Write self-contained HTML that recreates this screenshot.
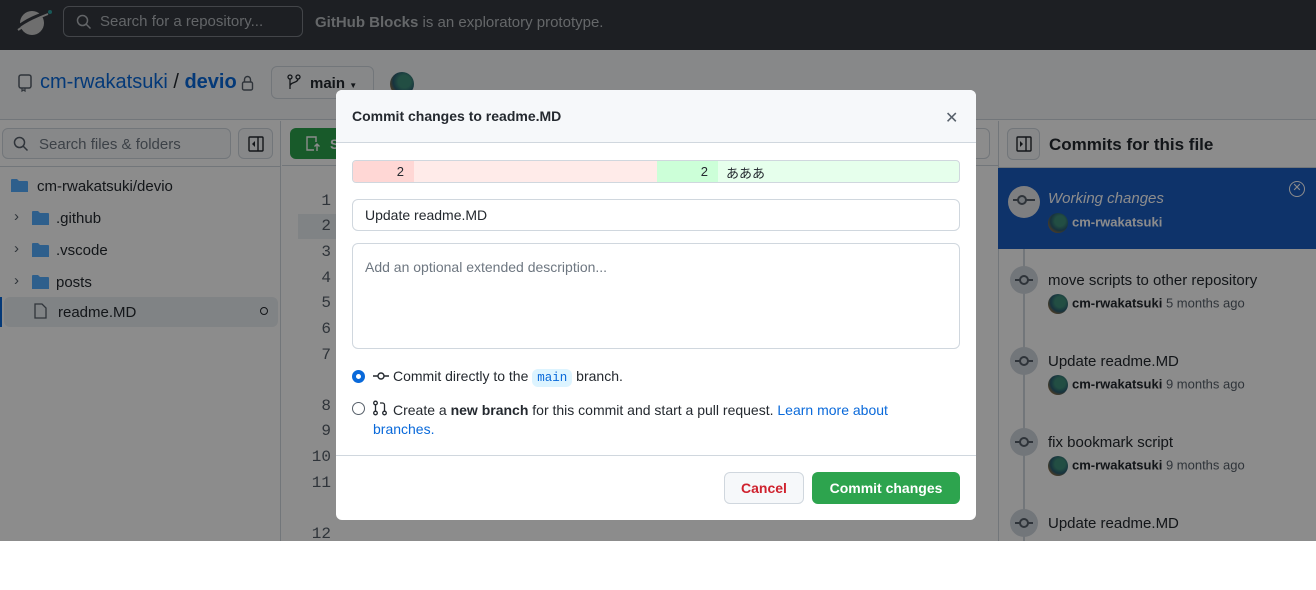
<!DOCTYPE html>
<html><head><meta charset="utf-8">
<style>
*{box-sizing:border-box;margin:0;padding:0}
body{width:1316px;height:541px;overflow:hidden;position:relative;font-family:"Liberation Sans","Noto Sans CJK JP",sans-serif;background:#fff;color:#24292f;font-size:14px}
.a{position:absolute}
.mono{font-family:"Liberation Mono",monospace}
.ln{position:absolute;right:985px;font-family:"Liberation Mono",monospace;font-size:16px;color:#57606a}
.commit{position:absolute;left:998px;width:318px;height:81px}
.node{position:absolute;left:12px;width:28px;height:28px;border-radius:50%;background:#d0d7de;}
.node:before{content:"";position:absolute;left:5px;right:5px;top:13px;height:2px;background:#57606a}
.node:after{content:"";position:absolute;left:9px;top:9px;width:6px;height:6px;border:2px solid #57606a;border-radius:50%;background:#d0d7de}
.av{display:inline-block;width:20px;height:20px;border-radius:50%;background:radial-gradient(circle at 60% 40%,#3f8f7a 30%,#2b5e72 55%,#a0703a 80%);vertical-align:middle;margin-right:4px}
.ct{position:absolute;left:50px;top:8px;font-size:15px;color:#24292f}
.cm{position:absolute;left:50px;top:32px;font-size:13px;color:#57606a}
.cm b{color:#24292f}
</style></head><body>
<div class="a" style="left:0;top:0;width:1316px;height:50px;background:#353a40"></div>
<svg class="a" style="left:14px;top:6px" width="40" height="34" viewBox="0 0 40 34"><circle cx="18" cy="17" r="12" fill="#c8c8c8"/><path d="M2 22 Q18 10 36 6" stroke="#353a40" stroke-width="3" fill="none"/><path d="M4 24 Q18 14 34 8" stroke="#c8c8c8" stroke-width="2" fill="none"/><circle cx="36" cy="6" r="2" fill="#2ea0a0"/></svg>
<div class="a" style="left:63px;top:6px;width:240px;height:31px;border:1px solid #7a7f86;border-radius:6px;color:#b4b8bd;font-size:15px;padding:6px 0 0 36px">Search for a repository...</div>
<svg class="a" style="left:76px;top:14px" width="16" height="16" viewBox="0 0 16 16"><circle cx="6.5" cy="6.5" r="5" stroke="#b4b8bd" stroke-width="1.5" fill="none"/><path d="M10 10l4.5 4.5" stroke="#b4b8bd" stroke-width="1.5"/></svg>
<div class="a" style="left:315px;top:14px;color:#b8bcc0;font-size:15px"><b>GitHub Blocks</b> is an exploratory prototype.</div>
<div class="a" style="left:0;top:50px;width:1316px;height:70px;background:#f6f8fa;border-bottom:1px solid #d0d7de"></div>
<svg class="a" style="left:17px;top:74px" width="16" height="18" viewBox="0 0 16 18"><rect x="2" y="1" width="12" height="13" rx="2" stroke="#57606a" stroke-width="1.5" fill="none"/><path d="M5 14v3l1.5-1 1.5 1v-3" stroke="#57606a" stroke-width="1.2" fill="none"/></svg>
<div class="a" style="left:40px;top:71px;font-size:20px;color:#0969da">cm-rwakatsuki<span style="color:#24292f"> / </span><b style="font-weight:600">devio</b></div>
<svg class="a" style="left:241px;top:75px" width="13" height="16" viewBox="0 0 13 16"><rect x="1.5" y="7" width="10" height="8" rx="1.5" stroke="#57606a" stroke-width="1.4" fill="none"/><path d="M3.5 7V4.5a3 3 0 016 0V7" stroke="#57606a" stroke-width="1.4" fill="none"/></svg>
<div class="a" style="left:271px;top:66px;width:103px;height:33px;border:1px solid #d0d7de;border-radius:6px;background:#f6f8fa;font-size:15px;padding:8px 0 0 38px;font-weight:600">main <span style="font-size:8px">▼</span></div>
<svg class="a" style="left:287px;top:74px" width="14" height="16" viewBox="0 0 14 16"><circle cx="3" cy="3" r="2" stroke="#24292f" stroke-width="1.3" fill="none"/><circle cx="11" cy="3" r="2" stroke="#24292f" stroke-width="1.3" fill="none"/><path d="M3 5v10M11 5c0 4-8 3-8 7" stroke="#24292f" stroke-width="1.3" fill="none"/></svg>
<div class="a av" style="left:390px;top:72px;width:24px;height:24px"></div>
<div class="a" style="left:0;top:121px;width:281px;height:420px;background:#fff;border-right:1px solid #d0d7de"></div>
<div class="a" style="left:2px;top:128px;width:229px;height:31px;border:1px solid #d0d7de;border-radius:6px;background:#f6f8fa;color:#6e7781;font-size:15px;padding:7px 0 0 36px">Search files &amp; folders</div>
<svg class="a" style="left:13px;top:136px" width="16" height="16" viewBox="0 0 16 16"><circle cx="6.5" cy="6.5" r="5" stroke="#57606a" stroke-width="1.5" fill="none"/><path d="M10 10l4.5 4.5" stroke="#57606a" stroke-width="1.5"/></svg>
<div class="a" style="left:238px;top:128px;width:35px;height:31px;border:1px solid #d0d7de;border-radius:6px;background:#f6f8fa"></div>
<svg class="a" style="left:248px;top:136px" width="16" height="16" viewBox="0 0 16 16"><rect x="1" y="1" width="14" height="14" rx="1" stroke="#24292f" stroke-width="1.4" fill="none"/><path d="M10 1v14" stroke="#24292f" stroke-width="1.4"/><path d="M7 5l-3 3 3 3z" fill="#24292f"/></svg>
<div class="a" style="left:0;top:166px;width:281px;height:1px;background:#d0d7de"></div>
<svg class="a" style="left:11px;top:178px" width="17" height="15" viewBox="0 0 17 15"><path d="M0 2a1 1 0 011-1h5l2 2h8a1 1 0 011 1v10H0z" fill="#54aeff"/></svg>
<div class="a" style="left:37px;top:178px;font-size:15px">cm-rwakatsuki/devio</div>
<div class="a" style="left:14px;top:208px;font-size:15px;color:#57606a">›</div>
<svg class="a" style="left:32px;top:211px" width="17" height="14" viewBox="0 0 17 14"><path d="M0 1a1 1 0 011-1h5l2 2h8a1 1 0 011 1v11H0z" fill="#54aeff"/></svg>
<div class="a" style="left:56px;top:210px;font-size:15px">.github</div>
<div class="a" style="left:14px;top:240px;font-size:15px;color:#57606a">›</div>
<svg class="a" style="left:32px;top:243px" width="17" height="14" viewBox="0 0 17 14"><path d="M0 1a1 1 0 011-1h5l2 2h8a1 1 0 011 1v11H0z" fill="#54aeff"/></svg>
<div class="a" style="left:56px;top:242px;font-size:15px">.vscode</div>
<div class="a" style="left:14px;top:272px;font-size:15px;color:#57606a">›</div>
<svg class="a" style="left:32px;top:275px" width="17" height="14" viewBox="0 0 17 14"><path d="M0 1a1 1 0 011-1h5l2 2h8a1 1 0 011 1v11H0z" fill="#54aeff"/></svg>
<div class="a" style="left:56px;top:274px;font-size:15px">posts</div>
<div class="a" style="left:4px;top:297px;height:30px;background:#eaeef2;border-radius:6px;width:274px"></div>
<div class="a" style="left:0;top:297px;width:2px;height:30px;background:#0969da"></div>
<svg class="a" style="left:34px;top:303px" width="13" height="16" viewBox="0 0 13 16"><path d="M1 1h7l4 4v10H1z" stroke="#57606a" stroke-width="1.3" fill="none"/></svg>
<div class="a" style="left:58px;top:304px;font-size:15px">readme.MD</div>
<div class="a" style="left:260px;top:307px;width:8px;height:8px;border:1.5px solid #24292f;border-radius:50%"></div>
<div class="a" style="left:282px;top:121px;width:716px;height:45px;border-bottom:1px solid #d0d7de"></div>
<div class="a" style="left:290px;top:128px;width:60px;height:31px;background:#2da44e;border-radius:6px"></div>
<svg class="a" style="left:305px;top:135px" width="16" height="17" viewBox="0 0 16 17"><path d="M9 15H2V2h9v5" stroke="#fff" stroke-width="1.4" fill="none"/><path d="M12 16V9M9.5 11.5L12 9l2.5 2.5" stroke="#fff" stroke-width="1.4" fill="none"/></svg>
<div class="a" style="left:330px;top:136px;color:#fff;font-weight:bold;font-size:14px">S</div>
<div class="a" style="left:940px;top:128px;width:50px;height:31px;border:1px solid #d0d7de;border-radius:6px"></div>
<div class="a" style="left:298px;top:214px;width:40px;height:25px;background:#eaeef2"></div>
<div class="ln" style="top:192px">1</div><div class="ln" style="top:217px">2</div><div class="ln" style="top:243px">3</div><div class="ln" style="top:269px">4</div><div class="ln" style="top:294px">5</div><div class="ln" style="top:320px">6</div><div class="ln" style="top:346px">7</div><div class="ln" style="top:397px">8</div><div class="ln" style="top:422px">9</div><div class="ln" style="top:448px">10</div><div class="ln" style="top:474px">11</div><div class="ln" style="top:525px">12</div>
<div class="a" style="left:998px;top:121px;width:318px;height:420px;border-left:1px solid #d0d7de"></div>
<div class="a" style="left:998px;top:167px;width:318px;height:1px;background:#d0d7de"></div>
<div class="a" style="left:1007px;top:128px;width:33px;height:32px;border:1px solid #d0d7de;border-radius:6px;background:#f6f8fa"></div>
<svg class="a" style="left:1016px;top:136px" width="16" height="16" viewBox="0 0 16 16"><rect x="1" y="1" width="14" height="14" rx="1" stroke="#24292f" stroke-width="1.4" fill="none"/><path d="M10 1v14" stroke="#24292f" stroke-width="1.4"/><path d="M4 5l3 3-3 3z" fill="#24292f"/></svg>
<div class="a" style="left:1049px;top:135px;font-size:17px;font-weight:bold">Commits for this file</div>
<div class="a" style="left:1023px;top:168px;width:2px;height:373px;background:#d0d7de"></div>
<div class="commit" style="top:168px;background:#1b5dc2">
 <div class="node" style="top:18px;left:10px;width:32px;height:32px;background:#e6e8eb"></div>
 <div class="ct" style="top:22px;font-style:italic;color:#fff">Working changes</div>
 <div class="cm" style="top:45px;color:#fff"><span class="av"></span><b style="color:#fff">cm-rwakatsuki</b></div>
 <div class="a" style="left:291px;top:13px;width:16px;height:16px;border:1.5px solid #fff;border-radius:50%;color:#fff;font-size:11px;text-align:center;line-height:13px">✕</div>
</div>
<div class="commit" style="top:266px"><div class="node" style="top:0"></div><div class="ct" style="top:6px">move scripts to other repository</div><div class="cm" style="top:28px"><span class="av"></span><b>cm-rwakatsuki</b> 5 months ago</div></div>
<div class="commit" style="top:347px"><div class="node" style="top:0"></div><div class="ct" style="top:6px">Update readme.MD</div><div class="cm" style="top:28px"><span class="av"></span><b>cm-rwakatsuki</b> 9 months ago</div></div>
<div class="commit" style="top:428px"><div class="node" style="top:0"></div><div class="ct" style="top:6px">fix bookmark script</div><div class="cm" style="top:28px"><span class="av"></span><b>cm-rwakatsuki</b> 9 months ago</div></div>
<div class="commit" style="top:509px"><div class="node" style="top:0"></div><div class="ct" style="top:6px">Update readme.MD</div></div>
<div class="a" style="left:0;top:0;width:1316px;height:541px;background:rgba(0,0,0,0.45)"></div>
<div class="a" style="left:336px;top:90px;width:640px;height:430px;background:#fff;border-radius:6px;overflow:hidden">
 <div class="a" style="left:0;top:0;width:640px;height:53px;background:#f6f8fa;border-bottom:1px solid #d0d7de"></div>
 <div class="a" style="left:16px;top:18px;font-size:14px;font-weight:bold">Commit changes to readme.MD</div>
 <div class="a" style="left:609px;top:18px;font-size:16px;color:#57606a">✕</div>
 <div class="a" style="left:16px;top:70px;width:608px;height:23px;border:1px solid #d0d7de;border-radius:4px;overflow:hidden;background:#e6ffec">
  <div class="a" style="left:0;top:0;width:61px;height:23px;background:#ffd7d5;text-align:right;padding:3px 10px 0 0;font-size:13px">2</div>
  <div class="a" style="left:61px;top:0;width:243px;height:23px;background:#ffebe9"></div>
  <div class="a" style="left:304px;top:0;width:61px;height:23px;background:#ccffd8;text-align:right;padding:3px 10px 0 0;font-size:13px">2</div>
  <div class="a" style="left:373px;top:2px;font-size:13px">あああ</div>
 </div>
 <div class="a" style="left:16px;top:109px;width:608px;height:32px;border:1px solid #d0d7de;border-radius:6px;padding:7px 12px;font-size:14px">Update readme.MD</div>
 <div class="a" style="left:16px;top:153px;width:608px;height:106px;border:1px solid #d0d7de;border-radius:6px;padding:15px 12px;font-size:14px;color:#6e7781">Add an optional extended description...</div>
 <div class="a" style="left:16px;top:280px;width:13px;height:13px;border:4px solid #0969da;border-radius:50%"></div>
 <svg class="a" style="left:36px;top:279px" width="18" height="14" viewBox="0 0 18 14"><circle cx="9" cy="7" r="3" stroke="#24292f" stroke-width="1.4" fill="none"/><path d="M1 7h5M12 7h5" stroke="#24292f" stroke-width="1.4"/></svg>
 <div class="a" style="left:57px;top:278px;font-size:14px">Commit directly to the <span class="mono" style="background:#ddf4ff;color:#0969da;padding:2px 5px;border-radius:6px;font-size:12.5px">main</span> branch.</div>
 <div class="a" style="left:16px;top:312px;width:13px;height:13px;border:1px solid #57606a;border-radius:50%"></div>
 <svg class="a" style="left:36px;top:310px" width="16" height="16" viewBox="0 0 16 16"><circle cx="3.5" cy="3" r="1.8" stroke="#24292f" stroke-width="1.3" fill="none"/><circle cx="3.5" cy="13" r="1.8" stroke="#24292f" stroke-width="1.3" fill="none"/><circle cx="12.5" cy="13" r="1.8" stroke="#24292f" stroke-width="1.3" fill="none"/><path d="M3.5 5v6M12.5 11V5a2 2 0 00-2-2H8" stroke="#24292f" stroke-width="1.3" fill="none"/></svg>
 <div class="a" style="left:57px;top:310px;font-size:14px;width:560px;line-height:21px">Create a <b>new branch</b> for this commit and start a pull request. <span style="color:#0969da">Learn more about</span></div>
 <div class="a" style="left:37px;top:331px;font-size:14px;color:#0969da">branches.</div>
 <div class="a" style="left:0;top:365px;width:640px;height:1px;background:#d0d7de"></div>
 <div class="a" style="left:388px;top:382px;width:80px;height:32px;border:1px solid #d0d7de;border-radius:6px;background:#f6f8fa;color:#cf222e;font-weight:bold;text-align:center;line-height:30px">Cancel</div>
 <div class="a" style="left:476px;top:382px;width:148px;height:32px;border-radius:6px;background:#2da44e;color:#fff;font-weight:bold;text-align:center;line-height:32px">Commit changes</div>
</div>
</body></html>
